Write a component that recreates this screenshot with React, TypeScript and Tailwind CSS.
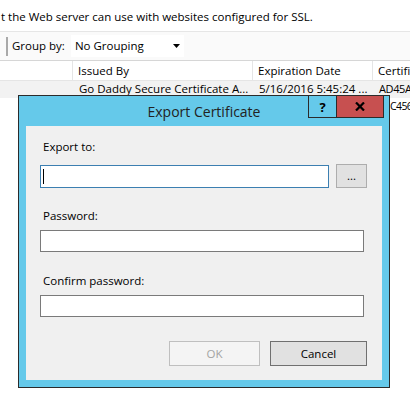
export default function App() {
  return (
    <div className="relative w-[410px] h-[410px] overflow-hidden bg-white text-[11.5px] leading-[16px] text-black font-['Open_Sans','Noto_Sans',sans-serif]">
      {/* page description */}
      <div className="h-[31px] pt-[9px] pl-[1px] whitespace-nowrap">
        t the Web server can use with websites configured for SSL.
      </div>

      {/* toolbar */}
      <div className="h-[29px] border-t border-[#e6e6e6] bg-[#fafafa] flex items-center">
        <div className="ml-[6px] w-[2px] h-[19px] bg-[#a9a9a9] shrink-0" />
        <span className="ml-[4px]">Group by:</span>
        <div className="ml-[6px] w-[113px] h-[22px] bg-white flex items-center pl-[4px] pr-[4px] shrink-0">
          <span className="flex-1">No Grouping</span>
          <svg width="7" height="4" viewBox="0 0 7 4">
            <path d="M0 0h7L3.5 4z" fill="#000" />
          </svg>
        </div>
      </div>

      {/* list header */}
      <div className="h-[21px] border-t border-[#d6d6d6] border-b border-b-[#e5e5e5] flex whitespace-nowrap">
        <div className="w-[73px] shrink-0 border-r border-[#e5e5e5]" />
        <div className="w-[180px] shrink-0 border-r border-[#e5e5e5] pl-[5px] pt-[2px]">Issued By</div>
        <div className="w-[120px] shrink-0 border-r border-[#e5e5e5] pl-[5px] pt-[2px]">Expiration Date</div>
        <div className="shrink-0 pl-[5px] pt-[2px]">Certifi</div>
      </div>

      {/* list rows */}
      <div className="h-[17px] bg-[#f2f2f2] flex whitespace-nowrap">
        <div className="w-[73px] shrink-0" />
        <div className="w-[180px] shrink-0 pl-[6px]">Go Daddy Secure Certificate A...</div>
        <div className="w-[120px] shrink-0 pl-[6px]">5/16/2016 5:45:24 ...</div>
        <div className="shrink-0 pl-[6px] text-[11px] tracking-[-0.4px]">AD45A</div>
      </div>
      <div className="h-[17px] flex whitespace-nowrap">
        <div className="w-[390px] shrink-0" />
        <div className="shrink-0 text-[10.5px] tracking-[-0.6px]">C456</div>
      </div>

      {/* modal dialog */}
      <div className="absolute left-[18px] top-[95px] w-[372px] h-[293px] border border-[#2b2b2b] bg-[#65c9ea] flex flex-col">
        <div className="relative h-[30px] flex items-center justify-center">
          <span className="text-[14px] text-[#222] mt-[1px]">Export Certificate</span>
          <div className="absolute -top-[1px] right-[5px] flex">
            <div className="w-[29px] h-[23px] border border-[#2b2b2b] flex items-center justify-center text-[13px] font-bold">?</div>
            <div className="w-[47px] h-[23px] border border-l-0 border-[#2b2b2b] bg-[#c75050] flex items-center justify-center">
              <svg width="10" height="9" viewBox="0 0 10 9">
                <path d="M1 0.5l8 8M9 0.5l-8 8" stroke="#000" strokeWidth="2.2" />
              </svg>
            </div>
          </div>
        </div>

        <div className="mx-[7px] mb-[7px] flex-1 bg-[#f0f0f0] pl-[14px] pr-[15px] flex flex-col">
          <div className="mt-[13px] h-[16px] pl-[3px]">Export to:</div>
          <div className="mt-[10px] flex">
            <div className="w-[289px] h-[23px] bg-white border border-[#3c7fb1] flex items-center pl-[2px]">
              <div className="w-[1px] h-[15px] bg-black" />
            </div>
            <div className="ml-[7px] w-[31px] h-[24px] -mt-[1px] bg-[#e1e1e1] border border-[#adadad] flex items-center justify-center">
              ...
            </div>
          </div>

          <div className="mt-[20px] h-[16px] pl-[3px]">Password:</div>
          <div className="mt-[6px] w-[324px] h-[22px] bg-white border border-[#7a7a7a]" />

          <div className="mt-[21px] h-[16px] pl-[3px]">Confirm password:</div>
          <div className="mt-[6px] w-[324px] h-[22px] bg-white border border-[#7a7a7a]" />

          <div className="mt-[24px] flex justify-end gap-[10px]">
            <div className="w-[91px] h-[25px] bg-[#f4f4f4] border border-[#bfbfbf] text-[#a3a3a3] flex items-center justify-center">OK</div>
            <div className="w-[97px] h-[25px] bg-[#e1e1e1] border border-[#707070] flex items-center justify-center">Cancel</div>
          </div>
        </div>
      </div>
    </div>
  );
}
